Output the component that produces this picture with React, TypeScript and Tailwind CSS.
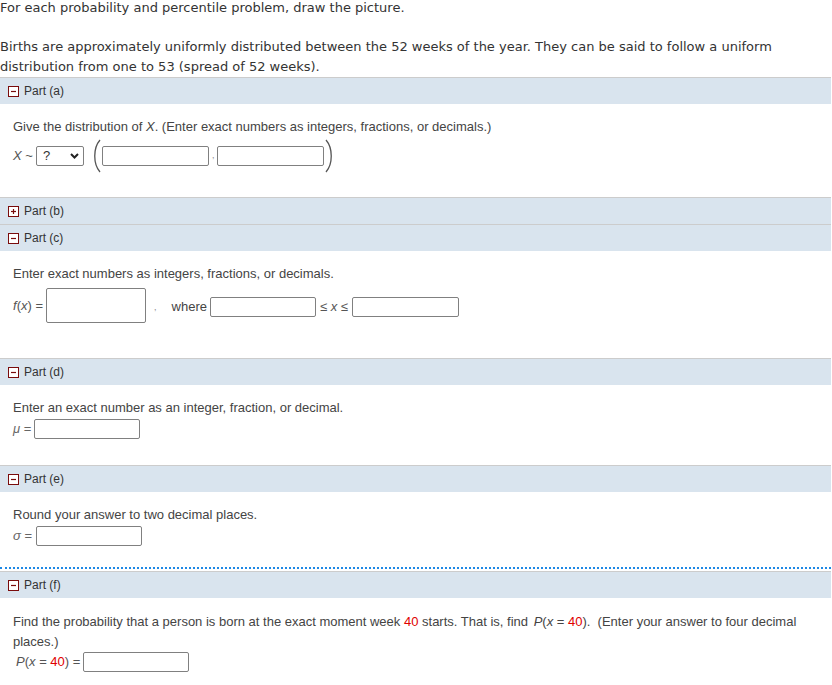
import React from "react";

const sans = "font-['Liberation_Sans',Arial,sans-serif]";

const ToggleIcon = ({ open }: { open: boolean }) => (
    <svg width="11" height="11" viewBox="0 0 11 11" className="shrink-0">
        <rect x="0.5" y="0.5" width="10" height="10" fill="#fff" stroke="#7a0c0c" />
        <line x1="3" y1="5.5" x2="8" y2="5.5" stroke="#7a0c0c" strokeWidth="1.2" />
        {!open && <line x1="5.5" y1="3" x2="5.5" y2="8" stroke="#7a0c0c" strokeWidth="1.2" />}
    </svg>
);

const PartHeader = ({ label, open = true }: { label: string; open?: boolean }) => (
    <div
        className={`flex h-[27px] items-center gap-[5px] border-t border-[#cccccc] bg-[#d9e4ee] pl-[8px] text-[12px] text-[#333] ${sans}`}
    >
        <ToggleIcon open={open} />
        <span>Part ({label})</span>
    </div>
);

const Box = ({ w, h = 20 }: { w: number; h?: number }) => (
    <span
        className="inline-block rounded-[2px] border border-[#808080] bg-white"
        style={{ width: w, height: h }}
    />
);

const Paren = ({ flip }: { flip?: boolean }) => (
    <svg width="10" height="34" viewBox="0 0 10 34" className={flip ? "-scale-x-100" : ""}>
        <path d="M8 1 C1 9 1 25 8 33" fill="none" stroke="#555" strokeWidth="1.3" />
    </svg>
);

const Red = ({ children }: { children: React.ReactNode }) => (
    <span className="text-[#e00000]">{children}</span>
);

export default function App() {
    return (
        <div className="w-[832px] bg-white pr-[1px]">
            <div className="font-['DejaVu_Sans',Verdana,sans-serif] text-[13px] text-[#333]">
                <p className="leading-[15px]">For each probability and percentile problem, draw the picture.</p>
                <p className="mt-[22px] leading-[20px]">
                    Births are approximately uniformly distributed between the 52 weeks of the year. They can be said to follow a uniform
                    distribution from one to 53 (spread of 52 weeks).
                </p>
            </div>

            <PartHeader label="a" />
            <div className={`h-[93px] pl-[13px] pt-[15px] text-[13px] text-[#444] ${sans}`}>
                <p className="leading-[16px]">
                    Give the distribution of <i>X</i>. (Enter exact numbers as integers, fractions, or decimals.)
                </p>
                <div className="mt-[4px] flex h-[34px] items-center">
                    <span className="text-[#555]"><i>X</i> ~</span>
                    <span className="ml-[3px] flex h-[20px] w-[48px] items-center justify-between rounded-[2px] border border-[#808080] pl-[6px] pr-[4px] text-[#333]">
                        ?
                        <svg width="9" height="6" viewBox="0 0 9 6">
                            <path d="M1 1 L4.5 4.5 L8 1" fill="none" stroke="#222" strokeWidth="2" />
                        </svg>
                    </span>
                    <span className="ml-[8px] flex items-center">
                        <Paren />
                        <Box w={107} />
                        <span className="mx-[3px] text-[9px] text-[#888]">,</span>
                        <Box w={107} />
                        <Paren flip />
                    </span>
                </div>
            </div>

            <PartHeader label="b" open={false} />
            <PartHeader label="c" />
            <div className={`h-[107px] pl-[13px] pt-[15px] text-[13px] text-[#444] ${sans}`}>
                <p className="leading-[16px]">Enter exact numbers as integers, fractions, or decimals.</p>
                <div className="mt-[6px] flex items-center">
                    <span className="text-[#555]"><i>f</i>(<i>x</i>) =</span>
                    <span className="ml-[3px] flex"><Box w={100} h={35} /></span>
                    <span className="ml-[8px] mt-[4px] text-[9px] text-[#888]">,</span>
                    <span className="ml-[15px] mt-[2px]">where</span>
                    <span className="ml-[3px] mt-[2px] flex"><Box w={106} /></span>
                    <span className="ml-[4px] mt-[2px] text-[#555]">≤ <i>x</i> ≤</span>
                    <span className="ml-[4px] mt-[2px] flex"><Box w={107} /></span>
                </div>
            </div>

            <PartHeader label="d" />
            <div className={`h-[80px] pl-[13px] pt-[15px] text-[13px] text-[#444] ${sans}`}>
                <p className="leading-[16px]">Enter an exact number as an integer, fraction, or decimal.</p>
                <div className="mt-[3px] flex items-center">
                    <span className="text-[#666]"><i>μ</i> =</span>
                    <span className="ml-[3px] flex"><Box w={106} /></span>
                </div>
            </div>

            <PartHeader label="e" />
            <div className={`h-[75px] pl-[13px] pt-[15px] text-[13px] text-[#444] ${sans}`}>
                <p className="leading-[16px]">Round your answer to two decimal places.</p>
                <div className="mt-[3px] flex items-center">
                    <span className="text-[#666]"><i>σ</i> =</span>
                    <span className="ml-[4px] flex"><Box w={106} /></span>
                </div>
            </div>
            <div className="h-[4px] border-t-2 border-dotted border-[#1e88e5]" />

            <PartHeader label="f" />
            <div className={`pl-[13px] pt-[14px] pb-[12px] text-[13px] text-[#444] ${sans}`}>
                <p className="w-[800px] leading-[20px]">
                    Find the probability that a person is born at the exact moment week <Red>40</Red> starts. That is, find{" "}
                    <span className="ml-[2px]"><i>P</i>(<i>x</i> = <Red>40</Red>)</span>.&nbsp; (Enter your answer to four decimal
                    places.)
                </p>
                <div className="ml-[3px] flex items-center">
                    <span className="text-[#555]"><i>P</i>(<i>x</i> = <Red>40</Red>) =</span>
                    <span className="ml-[3px] flex"><Box w={106} /></span>
                </div>
            </div>
        </div>
    );
}
